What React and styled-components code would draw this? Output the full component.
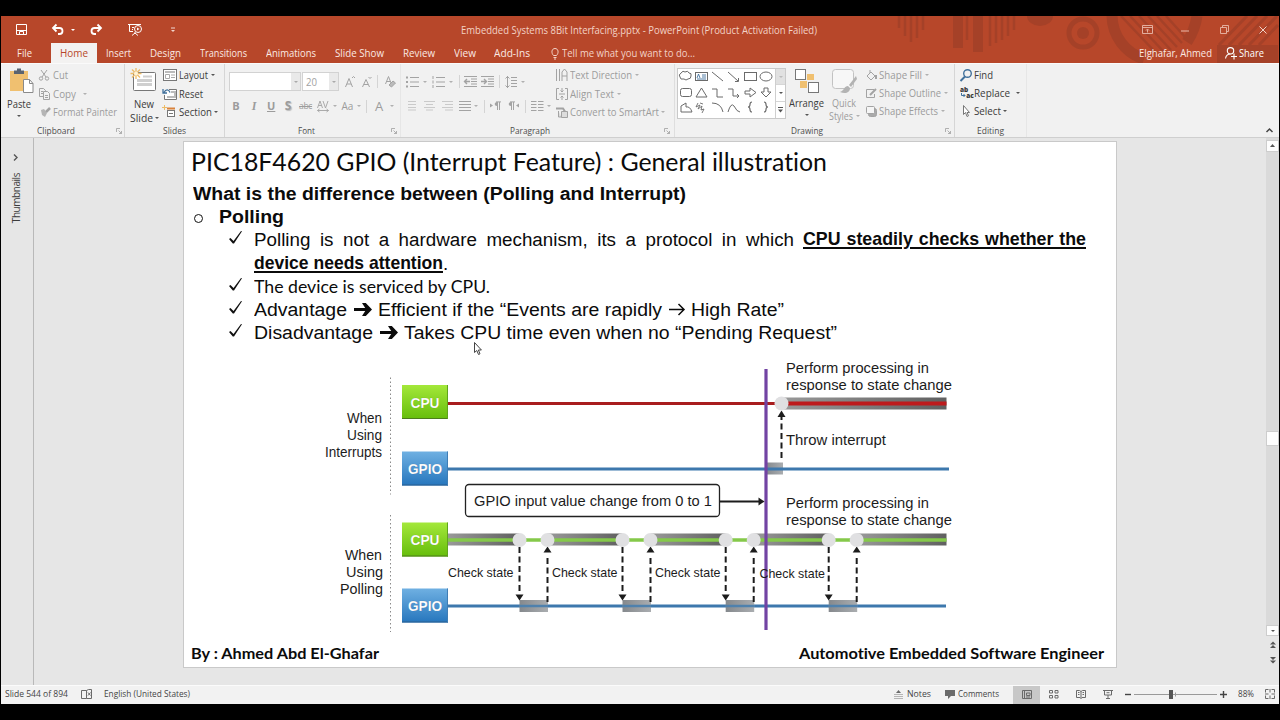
import React, { useLayoutEffect, useRef, useState } from "react";
import styled, { createGlobalStyle } from "styled-components";

const Global = createGlobalStyle`
  * { box-sizing: border-box; }
  body { margin: 0; background: #000; overflow: hidden; }
`;

const ui = `"Open Sans", "Noto Sans", sans-serif`;
const arial = `"Liberation Sans", Arial, sans-serif`;
const calibri = `Lato, "Open Sans", sans-serif`;

/* ---------- text fitted to a known measure ---------- */

const FitBox = styled.span`
  display: inline-block;
  flex: none;
  white-space: pre;
  font-variant-ligatures: none;
  width: ${(p) => p.$w}px;
  margin-left: ${(p) => p.$ml || 0}px;
  ${(p) => p.$color && `color: ${p.$color};`}
  ${(p) => p.$size && `font-size: ${p.$size}px;`}
  ${(p) => p.$family && `font-family: ${p.$family};`}
  ${(p) => p.$bold && `font-weight: 700;`}
`;
const FitText = styled.span`
  display: inline-block;
  transform-origin: 0 50%;
  text-decoration: ${(p) => (p.$on ? "underline" : "none")};
  text-decoration-thickness: 2px;
  text-underline-offset: 2px;
`;

function Fit({ w, ml, color, size, family, bold, underline, words, children }) {
  const ref = useRef(null);
  const [fit, setFit] = useState({});
  useLayoutEffect(() => {
    const natural = ref.current.getBoundingClientRect().width;
    const gaps = children.split(" ").length - 1;
    setFit(words ? { wordSpacing: (w - natural) / gaps } : { transform: `scaleX(${w / natural})` });
  }, []);
  return (
    <FitBox $w={w} $ml={ml} $color={color} $size={size} $family={family} $bold={bold}>
      <FitText ref={ref} $on={underline} style={fit}>{children}</FitText>
    </FitBox>
  );
}

/* ---------- window ---------- */

const Screen = styled.div`
  width: 1280px;
  height: 720px;
  padding: 16px 1px;
  background: #000;
  font: 11px/14px ${ui};
  color: #3b3b3b;
`;
const Window = styled.div`
  display: flex;
  flex-direction: column;
  height: 688px;
  background: #e6e6e6;
`;
const Header = styled.header`
  position: relative;
  height: 47px;
  background: #b7472a;
  color: #fbe9e3;
`;
const Decor = styled.svg`
  position: absolute;
  right: 0;
  top: 0;
`;
const Bar = styled.div`
  position: relative;
  display: flex;
  align-items: center;
  height: ${(p) => p.$h}px;
`;
const Tab = styled.div`
  display: flex;
  align-items: center;
  justify-content: center;
  width: 46px;
  height: 20px;
  margin-left: 19px;
  background: #f3f2f1;
  color: #b7472a;
`;
const Icon = styled.svg`
  flex: none;
  display: block;
  fill: none;
  stroke: ${(p) => p.$c || "#a3a3a3"};
  margin-left: ${(p) => p.$ml || 0}px;
  overflow: visible;
`;
const Ico = ({ w, h, ml, c, sw = 1, children }) => (
  <Icon width={w} height={h} viewBox={`0 0 ${w} ${h}`} $ml={ml} $c={c} strokeWidth={sw}>
    {children}
  </Icon>
);
const Caret = styled.i`
  flex: none;
  width: 0;
  height: 0;
  border: 2px solid transparent;
  border-top: 2.5px solid ${(p) => p.$c || "#555"};
  border-bottom: 0;
  margin-left: ${(p) => p.$ml || 0}px;
`;

/* ---------- ribbon ---------- */

const Ribbon = styled.div`
  display: flex;
  height: 75px;
  background: #f1f1f1;
  border-top: 1px solid #fafafa;
  border-bottom: 1px solid #cfcfcf;
`;
const Group = styled.section`
  display: flex;
  flex-direction: column;
  width: ${(p) => p.$w}px;
  height: 73px;
  border-right: 1px solid ${(p) => p.$line || "#d6d6d6"};
`;
const Content = styled.div`
  display: flex;
  height: 61px;
  padding-top: 2px;
`;
const GroupLabel = styled.div`
  display: flex;
  align-items: center;
  height: 12px;
  padding-left: ${(p) => p.$x}px;
  font-size: 9.5px;
  color: #4c4c4c;
`;
const Stack = styled.div`
  display: flex;
  flex-direction: column;
  flex: none;
  width: ${(p) => p.$w}px;
  margin-left: ${(p) => p.$ml || 0}px;
  padding-top: ${(p) => p.$pt || 0}px;
`;
const Line = styled.div`
  display: flex;
  align-items: center;
  height: ${(p) => p.$h || 18.5}px;
  padding-left: ${(p) => p.$x || 0}px;
  color: ${(p) => (p.$off ? "#9c9c9c" : "#3b3b3b")};
`;
const Combo = styled.div`
  display: flex;
  align-items: stretch;
  justify-content: space-between;
  width: ${(p) => p.$w}px;
  height: 19px;
  margin-left: ${(p) => p.$ml || 0}px;
  padding-left: 3px;
  background: #fff;
  border: 1px solid #d2d2d2;
  color: #a2a2a2;
  line-height: 17px;
`;
const ComboButton = styled.div`
  display: flex;
  align-items: center;
  justify-content: center;
  width: 9px;
  background: #e9e9e9;
`;
const Sep = styled.i`
  flex: none;
  width: 1px;
  height: 13px;
  background: #d4d4d4;
  margin-left: ${(p) => p.$ml}px;
`;
const Glyph = styled.span`
  flex: none;
  width: ${(p) => p.$w}px;
  margin-left: ${(p) => p.$ml || 0}px;
  text-align: center;
  white-space: nowrap;
  font-size: ${(p) => p.$size || 11}px;
  font-weight: ${(p) => (p.$b ? 700 : 400)};
  font-style: ${(p) => (p.$i ? "italic" : "normal")};
  font-family: ${(p) => p.$family || ui};
  text-decoration: ${(p) => p.$deco || "none"};
  text-shadow: ${(p) => (p.$shadow ? "1px 1px 1px #bbb" : "none")};
  letter-spacing: ${(p) => p.$ls || 0}px;
`;
const Gallery = styled.div`
  display: flex;
  width: 109px;
  height: 51px;
  margin: 2px 0 0 2px;
  background: #fff;
  border: 1px solid #c9c9c9;
`;
const GalleryScroll = styled.div`
  display: grid;
  grid-template-rows: repeat(3, 1fr);
  width: 11px;
  border-left: 1px solid #cfcfcf;
  & > div { display: flex; align-items: center; justify-content: center; border-bottom: 1px solid #d6d6d6; }
  & > div:first-child { background: #e1e1e1; }
  & > div:last-child { border-bottom: 0; }
`;

const Launcher = ({ ml }) => (
  <Ico w={6} h={6} ml={ml} c="#a0a0a0">
    <path d="M.5 4V.5H4M2.500 2.500l3 3M5.500 3v2.500H3" strokeWidth=".8" />
  </Ico>
);

function Clipboard() {
  return (
    <Group $w={124}>
      <Content>
        <Stack $w={30} $ml={4}>
          <Line $h={30} $x={5}>
            <Ico w={24} h={26}>
              <rect x="0" y="3" width="18" height="20" fill="#f0c070" stroke="none" />
              <path d="M4 6V2.500h3V.5h4v2h3V6z" fill="#5b6470" stroke="none" />
              <path d="M13.500 11.500h6l3.500 4v9h-9.500z" fill="#fff" stroke="#8a8a8a" />
              <path d="M19.500 11.500v4H23" stroke="#8a8a8a" />
            </Ico>
          </Line>
          <Line $h={15} $x={2}><Fit w={24}>Paste</Fit></Line>
          <Line $h={10} $x={12}><Caret /></Line>
        </Stack>
        <Stack $w={85} $ml={4}>
          <Line $off>
            <Ico w={10} h={11}><path d="M2 0l5 7M8 0L3 7" /><circle cx="2" cy="8.500" r="1.700" /><circle cx="8" cy="8.500" r="1.700" /></Ico>
            <Fit w={15} ml={4}>Cut</Fit>
          </Line>
          <Line $off>
            <Ico w={11} h={12}><path d="M.5.5h4l2 2v6h-6zM2 3.500h2M2 5.500h3" /><path d="M4.500 3.500h4l2 2v6h-6zM6 7.500h3M6 9.500h3" fill="#f1f1f1" /></Ico>
            <Fit w={23} ml={3}>Copy</Fit>
            <Caret $ml={7} $c="#b0b0b0" />
          </Line>
          <Line $off>
            <Ico w={11} h={11} ml={1}><path d="M1 3l3-1 3 4-2 4-3-2z" fill="#b5b5b5" stroke="none" /><path d="M6 5l4-4" strokeWidth="2.500" /></Ico>
            <Fit w={64} ml={2}>Format Painter</Fit>
          </Line>
        </Stack>
      </Content>
      <GroupLabel $x={36}><Fit w={38}>Clipboard</Fit><Launcher ml={41} /></GroupLabel>
    </Group>
  );
}

function Slides() {
  return (
    <Group $w={100}>
      <Content>
        <Stack $w={34} $ml={3}>
          <Line $h={30} $x={3}>
            <Ico w={27} h={26}>
              <rect x="2.500" y="4.500" width="22" height="18" rx="1" fill="#fff" stroke="#777" />
              <path d="M12 8.500h9" stroke="#cfcfcf" strokeWidth="2" />
              <path d="M6 12.500h15M6 16.500h15" stroke="#cfcfcf" strokeWidth="3" />
              <path d="M5 0v11M-.5 5.500h11M1 1.500l8 8M9 1.500l-8 8" stroke="#eebc66" strokeWidth="1.300" />
              <circle cx="5" cy="5.500" r="2" fill="#fff3d6" stroke="none" />
            </Ico>
          </Line>
          <Line $h={15} $x={6}><Fit w={20}>New</Fit></Line>
          <Line $h={13} $x={2}><Fit w={23}>Slide</Fit><Caret $ml={2} /></Line>
        </Stack>
        <Stack $w={60} $ml={1}>
          <Line>
            <Ico w={14} h={12} c="#777"><rect x=".5" y=".5" width="13" height="11" fill="#fff" /><path d="M2 3h10" stroke="#bbb" strokeWidth="2" /><path d="M2.500 5.500h4v4h-4zM8 6h4M8 8.500h4" stroke="#aaa" /></Ico>
            <Fit w={29} ml={2}>Layout</Fit><Caret $ml={3} />
          </Line>
          <Line>
            <Ico w={14} h={12} c="#777"><path d="M6 1.500h7.500v10H1.500V7" fill="#fff" /><path d="M8 4h4v5H4" stroke="#bbb" strokeWidth="2" /><path d="M1 4.500c2-4 5-3 6 0M0 1v4h4" stroke="#41719c" strokeWidth="1.300" /></Ico>
            <Fit w={24} ml={2}>Reset</Fit>
          </Line>
          <Line>
            <Ico w={14} h={12} c="#777"><path d="M4 2.500h8" stroke="#d9823b" strokeWidth="2" /><rect x="4.500" y="4.500" width="7" height="6" fill="#fff" /><path d="M6 7.500h4" /><path d="M1.500-1v5M-1 1.500h5" stroke="#eebc66" /></Ico>
            <Fit w={33} ml={2}>Section</Fit><Caret $ml={2} />
          </Line>
        </Stack>
      </Content>
      <GroupLabel $x={38}><Fit w={23}>Slides</Fit></GroupLabel>
    </Group>
  );
}

function FontGroup() {
  return (
    <Group $w={176} $line="#e6e6e6">
      <Content>
        <Stack $w={172} $ml={3} $pt={3.5}>
          <Line $h={24} $off>
            <Combo $w={72} $ml={1}><span /><ComboButton><Caret $c="#aaa" /></ComboButton></Combo>
            <Combo $w={37} $ml={1}><Fit w={11}>20</Fit><ComboButton><Caret $c="#aaa" /></ComboButton></Combo>
            <Ico w={10} h={12} ml={6}><path d="M.5 11L4 2.500 7.500 11M2 8h4M7 2l1.500-1.500L10 2" /></Ico>
            <Ico w={10} h={12} ml={7}><path d="M.5 11L4 3.500 7.500 11M2 8.500h4M6.500 1L8 2.500 9.500 1" /></Ico>
            <Sep $ml={5} />
            <Ico w={11} h={12} ml={7}><path d="M.5 8L3.500.5 6 7M1.500 5.500h4" /><path d="M4 9l4-4 2.500 2-4 4z" fill="#bbb" /></Ico>
          </Line>
          <Line $h={25} $x={4} $off>
            <Glyph $w={8} $b>B</Glyph>
            <Glyph $w={8} $ml={10} $i $b $size={12} $family={`"Liberation Serif", serif`}>I</Glyph>
            <Glyph $w={8} $ml={9} $b $deco="underline">U</Glyph>
            <Glyph $w={8} $ml={9} $b $shadow $size={12}>S</Glyph>
            <Glyph $w={13} $ml={7} $size={8.5} $deco="line-through" $ls={-0.3}>abc</Glyph>
            <Ico w={13} h={12} ml={5}><path d="M.5 8L3 1l2.500 7M1.500 5.500h3M6 1l2.500 7L11 1M.5 10.500h11M2.500 9l-2 1.500 2 1.500M9.500 9l2 1.500-2 1.500" strokeWidth=".9" /></Ico>
            <Caret $ml={3} $c="#b0b0b0" />
            <Glyph $w={13} $ml={4} $size={10}>Aa</Glyph>
            <Caret $ml={3} $c="#b0b0b0" />
            <Sep $ml={5} />
            <Glyph $w={8} $ml={8} $size={13}>A</Glyph>
            <Caret $ml={7} $c="#b0b0b0" />
          </Line>
        </Stack>
      </Content>
      <GroupLabel $x={73}><Fit w={17}>Font</Fit><Launcher ml={76} /></GroupLabel>
    </Group>
  );
}

const Lines = ({ ml, o = 1, d = "M0 1.500h12M0 4.500h12M0 7.500h12M0 10.500h12" }) => (
  <Ico w={12} h={12} ml={ml}><path d={d} opacity={o} /></Ico>
);

function Paragraph() {
  return (
    <Group $w={274} $line="#dedede">
      <Content>
        <Stack $w={150} $ml={5} $pt={3.5}>
          <Line $h={24} $off>
            <Ico w={13} h={12}><path d="M4 1.500h9M4 6h9M4 10.500h9" /><path d="M0 1.500h2M0 6h2M0 10.500h2" strokeWidth="2" /></Ico>
            <Caret $ml={4} $c="#b0b0b0" />
            <Ico w={13} h={12} ml={5}><path d="M4 1.500h9M4 6h9M4 10.500h9M1 0v3M1 4.500v3M1 9v3" /></Ico>
            <Caret $ml={4} $c="#b0b0b0" />
            <Sep $ml={6} />
            <Ico w={13} h={11} ml={4}><path d="M0 .5h13M7 3h6M7 5.500h6M7 8h6M0 10.500h13" /><path d="M6 5.500H1M3 3L.5 5.500 3 8" strokeWidth="1.400" /></Ico>
            <Ico w={13} h={11} ml={4}><path d="M0 .5h13M7 3h6M7 5.500h6M7 8h6M0 10.500h13" /><path d="M0 5.500h5M3 3l2.500 2.500L3 8" strokeWidth="1.400" /></Ico>
            <Sep $ml={5} />
            <Ico w={12} h={12} ml={5}><path d="M2.500 0v12M.5 2.500l2-2 2 2M.5 9.500l2 2 2-2M6 1.500h6M6 4.500h6M6 7.500h6M6 10.500h6" /></Ico>
            <Caret $ml={4} $c="#b0b0b0" />
          </Line>
          <Line $h={25} $x={2} $off>
            <Lines o={0.5} d="M0 1.500h8M0 4.500h8M0 7.500h8M0 10h8" />
            <Lines ml={4} o={0.5} d="M0 1.500h11M2 4.500h7M0 7.500h11M2 10h7" />
            <Lines ml={6} o={0.5} d="M0 1.500h11M3 4.500h8M0 7.500h11M3 10h8" />
            <Lines ml={5} />
            <Caret $ml={3} $c="#b0b0b0" />
            <Sep $ml={6} />
            <Ico w={11} h={10} ml={5}><path d="M0 2.500l3 2-3 2zM7 1c-3 0-3 4 0 4z" fill="#a3a3a3" stroke="none" /><path d="M7.500 9V1M9.500 9V1M6 .9h5" /></Ico>
            <Ico w={11} h={10} ml={7}><path d="M11 2.500l-3 2 3 2zM3 1c-3 0-3 4 0 4z" fill="#a3a3a3" stroke="none" /><path d="M3.500 9V1M5.500 9V1M2 .9h5" /></Ico>
            <Sep $ml={6} />
            <Lines ml={5} d="M0 1.500h5.500M0 4.500h5.500M0 7.500h5.500M0 10.500h5.500M7 1.500h5.500M7 4.500h5.500M7 7.500h5.500M7 10.500h5.500" />
            <Caret $ml={4} $c="#b0b0b0" />
          </Line>
        </Stack>
        <Stack $w={115}>
          <Line $off>
            <Ico w={12} h={12}><path d="M.5 0v12M3.500 0v12M6 12V3l2.500-3L11 3v9M6 7h5" /></Ico>
            <Fit w={62} ml={2}>Text Direction</Fit><Caret $ml={3} $c="#b0b0b0" />
          </Line>
          <Line $off>
            <Ico w={12} h={12}><path d="M3 .5H.5v11H3M9 .5h2.500v11H9M6 0v4M6 12V8M4.500 2.500L6 4l1.500-1.500M4.500 9.500L6 8l1.500 1.500M3 6h6" /></Ico>
            <Fit w={44} ml={2}>Align Text</Fit><Caret $ml={3} $c="#b0b0b0" />
          </Line>
          <Line $off>
            <Ico w={12} h={11}><path d="M0 1.500h7l2 3" strokeWidth="2" /><path d="M2.500 4v6h3M5.500 4.500h6v6h-6z" fill="#ddd" /></Ico>
            <Fit w={89} ml={2}>Convert to SmartArt</Fit><Caret $ml={2} $c="#b0b0b0" />
          </Line>
        </Stack>
      </Content>
      <GroupLabel $x={109}><Fit w={40}>Paragraph</Fit><Launcher ml={114} /></GroupLabel>
    </Group>
  );
}

function Drawing() {
  return (
    <Group $w={280}>
      <Content>
        <Gallery>
          <Ico w={97} h={49} c="#6b6b6b">
            <path d="M3 4q2-3 4-1 3-2 4 1 3 0 2 3 0 3-3 3-2 2-4 0-4 1-4-2-2-2 1-4z" />
            <rect x="17.500" y="3.500" width="12" height="8" /><path d="M19 9l1.500-4L22 9M24 6h4M24 8h4M19 10h9" stroke="#41719c" strokeWidth=".9" />
            <path d="M34 3l11 9M50 3l10 9M60.500 9v3.500H57" />
            <rect x="66.500" y="3.500" width="12" height="8" /><ellipse cx="88" cy="7.500" rx="6" ry="4.500" />
            <rect x="2.500" y="19.500" width="11" height="8" rx="2" /><path d="M23.500 19l5.500 9H18z" />
            <path d="M34 20h5v8h6M50 20h5v7h6M59 25l2 2-2 2" />
            <path d="M67 22h5v-3l6 4.500-6 4.500v-3h-5zM86 19h4v4h3l-5 5-5-5h3z" />
            <path d="M3 43V37l5-3 0 4q4-1 6 5z" /><path d="M20 34l-2 4 4-2-2 4 4-3-1 4 3-1-2 4M22 34l3 1" strokeWidth=".9" />
            <path d="M34 34q9 0 11 9M50 43q3-10 6-6 3 6 6 6" />
            <path d="M74 33q-2 0-2 2.500T70 38q2 0 2 2.500T74 43M86 33q2 0 2 2.500T90 38q-2 0-2 2.500T86 43" strokeWidth="1.200" />
          </Ico>
          <GalleryScroll>
            <div><Caret $c="#bbb" /></div>
            <div><Caret /></div>
            <div><Ico w={5} h={6} c="#555"><path d="M0 .5h5" /><path d="M0 2.500h5L2.500 5.500z" fill="#555" stroke="none" /></Ico></div>
          </GalleryScroll>
        </Gallery>
        <Stack $w={40} $ml={2}>
          <Line $h={30} $x={7}>
            <Ico w={24} h={24} c="#777">
              <path d="M12 5h7v6h-7zM5 12h7v7H5z" fill="#f0c070" stroke="none" />
              <rect x=".5" y=".5" width="10" height="10" fill="#fff" /><rect x="13.500" y="13.500" width="10" height="10" fill="#fff" />
            </Ico>
          </Line>
          <Line $h={13} $x={1}><Fit w={35}>Arrange</Fit></Line>
          <Line $h={12} $x={17}><Caret /></Line>
        </Stack>
        <Stack $w={36}>
          <Line $h={30} $x={4} $off>
            <Ico w={25} h={26} c="#c2c2c2">
              <rect x=".5" y="1.500" width="21" height="19" rx="3" fill="#f7f7f7" />
              <path d="M24 8l-7 9 2 2 6-8zM16 18c-4 0-3 4-8 6 5 2 10 1 10-4z" fill="#b3b3b3" stroke="none" />
            </Ico>
          </Line>
          <Line $h={13} $x={4} $off><Fit w={24}>Quick</Fit></Line>
          <Line $h={13} $x={1} $off><Fit w={24}>Styles</Fit><Caret $ml={3} $c="#b0b0b0" /></Line>
        </Stack>
        <Stack $w={84} $ml={2}>
          <Line $h={18} $off>
            <Ico w={11} h={11}><path d="M1 6l4-4 4 4-4 4zM4 3V0" /><path d="M10 5v4" strokeWidth="2" /></Ico>
            <Fit w={43} ml={2}>Shape Fill</Fit><Caret $ml={3} $c="#b0b0b0" />
          </Line>
          <Line $h={18} $off>
            <Ico w={11} h={11}><path d="M8 1.500H.5v8h8V6" /><path d="M4 7l6-6" strokeWidth="2" /></Ico>
            <Fit w={62} ml={2}>Shape Outline</Fit><Caret $ml={3} $c="#b0b0b0" />
          </Line>
          <Line $h={18} $off>
            <Ico w={11} h={11}><rect x="2.500" y="2.500" width="8" height="8" rx="2" fill="#aaa" /><rect x=".5" y=".5" width="8" height="7" rx="1" fill="#f5f5f5" /></Ico>
            <Fit w={59} ml={2}>Shape Effects</Fit><Caret $ml={3} $c="#b0b0b0" />
          </Line>
        </Stack>
      </Content>
      <GroupLabel $x={116}><Fit w={32}>Drawing</Fit><Launcher ml={122} /></GroupLabel>
    </Group>
  );
}

const Letters = styled.span`
  display: flex;
  flex: none;
  align-items: flex-start;
  width: 13px;
  height: 12px;
  font: 700 6.5px/6px ${ui};
  & > b:last-child { align-self: flex-end; margin-left: -2px; }
`;

function Editing() {
  return (
    <Group $w={72} $line="#e6e6e6">
      <Content>
        <Stack $w={68} $ml={5}>
          <Line $h={18}>
            <Ico w={12} h={12} c="#41719c" sw={1.4}><circle cx="7.500" cy="4.500" r="3.800" /><path d="M5 7.500L.5 12" strokeWidth="2" /></Ico>
            <Fit w={19} ml={2}>Find</Fit>
          </Line>
          <Line $h={18}>
            <Letters><b>ab</b><b>ac</b></Letters>
            <Ico w={5} h={5} ml={-12} c="#41719c"><path d="M.5 2v2.500H4M2.500 3l1.500 1.500L2.500 6" /></Ico>
            <Fit w={36} ml={8}>Replace</Fit><Caret $ml={6} />
          </Line>
          <Line $h={18}>
            <Ico w={12} h={12} c="#777"><path d="M3.500.5v9l2-2 1.500 4 1.500-.7L7 7.500h2.500z" fill="#fff" /></Ico>
            <Fit w={27} ml={2}>Select</Fit><Caret $ml={2} />
          </Line>
        </Stack>
      </Content>
      <GroupLabel $x={22}><Fit w={27}>Editing</Fit></GroupLabel>
    </Group>
  );
}
const RibbonEnd = styled.div`
  display: flex;
  flex: 1;
  align-items: flex-end;
  justify-content: flex-end;
  padding: 0 6px 4px 0;
`;

/* ---------- header ---------- */

const c = "#fff";
const shade = "#a54128";
const TitleBar = () => (
  <Header>
    <Decor width="400" height="47" viewBox="880 16 400 47">
      <g stroke={shade} fill="none">
        <path d="M900 16v12M906 16v20M912 16v26M918 16v22M924 16v14" strokeWidth="2.500" />
        <path d="M959 16v32M979 16v36" strokeWidth="10" />
        <path d="M968 16v24M991 16v30M997 16v27M1003 16v24M1009 16v20M1015 16v14" strokeWidth="2.500" />
        <path d="M1028 16a13 10 0 0 0 26 0z" fill={shade} stroke="none" />
        <circle cx="1084" cy="33" r="14" strokeWidth="5" /><circle cx="1084" cy="33" r="6" fill={shade} stroke="none" />
        <path d="M1113 16a46 46 0 0 0 32 43M1198 16q-2 14-10 26" strokeWidth="11" />
        <path d="M1122 16l36 38M1131 16l34 36M1140 16l32 34M1149 16l29 31M1158 16l25 27M1167 16l20 22" strokeWidth="2.500" />
        <path d="M1220 45l28-29M1230 45l28-29M1240 45l28-29M1250 45l28-29M1260 45l19-20" strokeWidth="3" />
        <path d="M1218 45h61v18h-61z" fill={shade} stroke="none" />
      </g>
    </Decor>
    <Bar $h={27}>
      <Ico w={11} h={11} ml={15} c={c}><path d="M.5.5h10v10H.5zM.5 6.500h10M3.500 10v-2.500h4V10" /></Ico>
      <Ico w={12} h={11} ml={25} c={c} sw={1.8}><path d="M4.500.5L1 4l3.500 3.500M1 4h6.500a3 3 0 0 1 0 6H6" /></Ico>
      <Caret $ml={7} $c="#fff" />
      <Ico w={12} h={11} ml={15} c={c} sw={1.8}><path d="M7.500.5L11 4 7.500 7.500M11 4H4.500a3 3 0 0 0 0 6H6" /></Ico>
      <Ico w={14} h={12} ml={26} c={c}><path d="M0 .5h13M1.500.5v7H5M7 8v2M4 11.500L7 9l3 2.500M4 3.500h2M4 5.500h1" /><circle cx="10" cy="5" r="3.500" /><path d="M9 3.500v3l2.500-1.500z" fill="#fff" stroke="none" /></Ico>
      <Ico w={4} h={6} ml={29} c={c}><path d="M0 1h4" strokeWidth=".8" /><path d="M0 3h4l-2 2z" fill="#f3d5cb" stroke="none" /></Ico>
      <Fit w={356} ml={286} color="#f3d2c6">Embedded Systems 8Bit Interfacing.pptx - PowerPoint (Product Activation Failed)</Fit>
      <Ico w={11} h={9} ml={325} c="#e8b9aa"><path d="M.5.5h10v8H.5zM.5 2.500h10M5.500 7.500v-3M4 5.500L5.500 4 7 5.500" strokeWidth=".9" /></Ico>
      <Ico w={8} h={9} ml={28} c="#e8b9aa"><path d="M0 6h8" /></Ico>
      <Ico w={9} h={9} ml={31} c="#e8b9aa"><path d="M.5 2.500h6v6h-6zM2.500 2.500v-2h6v6h-2" strokeWidth=".9" /></Ico>
      <Ico w={8} h={8} ml={30} c="#f3d2c6"><path d="M.5.5l7 7M7.500.5l-7 7" /></Ico>
    </Bar>
    <Bar $h={20}>
      <Fit w={15} ml={16}>File</Fit>
      <Tab><Fit w={28}>Home</Fit></Tab>
      <Fit w={25} ml={9}>Insert</Fit>
      <Fit w={31} ml={19}>Design</Fit>
      <Fit w={47} ml={19}>Transitions</Fit>
      <Fit w={50} ml={19}>Animations</Fit>
      <Fit w={49} ml={19}>Slide Show</Fit>
      <Fit w={32} ml={19}>Review</Fit>
      <Fit w={22} ml={19}>View</Fit>
      <Fit w={36} ml={18}>Add-Ins</Fit>
      <Ico w={8} h={11} ml={21} c="#f3d2c6"><path d="M2.500 7.500C0 5 .5.5 4 .5s4 4.500 1.500 7zM2.500 9.500h3M3 11h2" /></Ico>
      <Fit w={133} ml={3} color="#f3d2c6">Tell me what you want to do...</Fit>
      <Fit w={73} ml={444}>Elghafar, Ahmed</Fit>
      <Ico w={12} h={12} ml={13} c={c} sw={1.1}><circle cx="5.500" cy="3.800" r="3.200" /><path d="M.5 11.500c.5-3 2-4.500 5-4.500M6 9.500h6M9 6.500v6" /></Ico>
      <Fit w={25} ml={2} color="#fff">Share</Fit>
    </Bar>
  </Header>
);

/* ---------- workspace ---------- */

const Workspace = styled.main`
  display: flex;
  height: 547px;
`;
const Thumbs = styled.aside`
  display: flex;
  flex-direction: column;
  align-items: center;
  width: 33px;
  padding: 16px 3px 0 0;
  border-right: 1px solid #b9b9b9;
`;
const Vertical = styled.span`
  writing-mode: vertical-rl;
  transform: rotate(180deg);
  margin-top: 12px;
  font-size: 10px;
  letter-spacing: -0.45px;
  line-height: 14px;
`;
const Stage = styled.div`
  flex: 1;
  padding: 3px 0 0 149px;
`;
const Slide = styled.article`
  position: relative;
  width: 934px;
  height: 527px;
  background: #fff;
  border: 1px solid #c9c9c9;
  color: #0b0b0b;
  font-family: ${arial};
  font-size: 18.8px;
`;
const SlideTitle = styled.h1`
  display: flex;
  height: 39.7px;
  margin: 0;
  padding-left: 7px;
  font: 400 24.5px/39px ${calibri};
`;
const Row = styled.div`
  display: flex;
  height: 23.3px;
  line-height: 23.3px;
  padding-left: ${(p) => p.$x}px;
`;
const Bullet = styled.span`
  width: ${(p) => p.$w}px;
  padding-top: ${(p) => p.$pt || 0}px;
`;
const Arrow = styled.span`
  width: ${(p) => p.$w}px;
  margin: 5px 6px 0 7px;
`;
const Figure = styled.svg`
  display: block;
  margin: 15.2px 0 0 136px;
  font-family: ${arial};
  overflow: visible;
`;
const Footer = styled.footer`
  display: flex;
  justify-content: space-between;
  padding: 4px 12px 0 7px;
  font: 700 16px/26px ${calibri};
`;
const Pointer = styled.div`
  position: absolute;
  left: 290px;
  top: 200px;
`;
const ScrollBar = styled.div`
  display: flex;
  flex-direction: column;
  align-items: center;
  width: 13px;
  height: 530px;
  padding-top: 2px;
  background: #dadada;
`;
const ScrollButton = styled.div`
  display: flex;
  align-items: center;
  justify-content: center;
  width: 13px;
  height: ${(p) => p.$h}px;
  margin-top: ${(p) => p.$mt || 0}px;
  background: #fdfdfd;
  border: 1px solid #cdcdcd;
`;
const ScrollPage = styled.div`
  display: flex;
  flex-direction: column;
  align-items: center;
  justify-content: space-around;
  width: 13px;
  height: 32px;
  background: #e6e6e6;
`;

const Check = () => (
  <Bullet $w={26} $pt={3}>
    <Ico w={13} h={13} ml={1} c="#111"><path d="M0 8l1.500-1 3 3L12 0l1 .3L5 12.500H3.800z" fill="#111" stroke="none" /></Ico>
  </Bullet>
);
const HeavyArrow = () => (
  <Arrow $w={18}><Ico w={18} h={14} c="#0b0b0b"><path d="M0 6.500h15" strokeWidth="3" /><path d="M8 0h3.800l6.200 6.500-6.200 6.500H8l4.200-6.500z" fill="#0b0b0b" stroke="none" /></Ico></Arrow>
);
const ThinArrow = () => (
  <Arrow $w={16}><Ico w={16} h={14} c="#0b0b0b" sw={1.5}><path d="M0 6.500h15M9.500 1L15 6.500 9.500 12" /></Ico></Arrow>
);

const Box = ({ y, label, gpio }) => (
  <g>
    <rect x="402" y={y} width="46" height="34" fill={gpio ? "url(#blueBox)" : "url(#greenBox)"} />
    <path d={`M402 ${y + 33.5}h46`} stroke={gpio ? "#2b5f8f" : "#4c7d1c"} />
    <path d={`M447.500 ${y}v34`} stroke={gpio ? "#3f7db5" : "#5fa31d"} />
    <text x={gpio ? 408 : 410.5} y={y + 22.5} textLength={gpio ? 34 : 29} lengthAdjust="spacingAndGlyphs" fontSize="14" fontWeight="700" fill="#fff" stroke="#0003" strokeWidth=".4">{label}</text>
  </g>
);
const Txt = ({ x, y, w, s = 14.7, children }) => (
  <text x={x} y={y} textLength={w} lengthAdjust="spacingAndGlyphs" fontSize={s} fill="#1c1c1c">{children}</text>
);
const checks = [519.5, 622.5, 725.7, 828.7];
const busy = [[448, 519], [547, 622], [651, 726], [754, 829], [857, 946.5]];

const Diagram = () => (
  <Figure width="640" height="276" viewBox="320 360 640 276">
    <defs>
      <linearGradient id="greenBox" x1="0" y1="0" x2="0" y2="1"><stop offset="0" stopColor="#a4e83a" /><stop offset="1" stopColor="#66bd0c" /></linearGradient>
      <linearGradient id="blueBox" x1="0" y1="0" x2="0" y2="1"><stop offset="0" stopColor="#6fb0e2" /><stop offset="1" stopColor="#2676bd" /></linearGradient>
      <linearGradient id="busyBar" x1="0" y1="0" x2="1" y2="0"><stop offset="0" stopColor="#999" /><stop offset="1" stopColor="#606060" /></linearGradient>
      <linearGradient id="gpioBar" x1="0" y1="0" x2="1" y2="0"><stop offset="0" stopColor="#85898d" /><stop offset="1" stopColor="#aaadb0" /></linearGradient>
    </defs>
    <path d="M390.500 377.500v117M390.500 515v117" stroke="#8a8a8a" strokeDasharray="1.500 2.500" />
    <Txt x={347} y={422.6} w={35}>When</Txt><Txt x={347} y={440} w={35}>Using</Txt><Txt x={325} y={457} w={57}>Interrupts</Txt>
    <Txt x={345} y={559.6} w={37}>When</Txt><Txt x={346} y={577} w={37}>Using</Txt><Txt x={340} y={594.3} w={43}>Polling</Txt>

    <rect x="781" y="397.500" width="165.500" height="12" fill="url(#busyBar)" />
    <path d="M448 403.500h340" stroke="#a81c1e" strokeWidth="3" /><path d="M786 403.500h160.500" stroke="#bd1a1c" strokeWidth="4" />
    <rect x="766" y="462.500" width="17" height="12" fill="url(#gpioBar)" />
    <path d="M448 469h501M448 606h498" stroke="#3d78ad" strokeWidth="3" />

    {busy.map(([a, b]) => <rect key={a} x={a} y="533.500" width={b - a} height="12" fill="url(#busyBar)" />)}
    <path d="M448 540h498.500" stroke="#85c94a" strokeWidth="3.400" />
    {checks.map((x) => (
      <g key={x}>
        <rect x={x} y="600" width="28.500" height="12" fill="url(#gpioBar)" />
        <path d={`M${x} 606h28.500`} stroke="#4f81ad" strokeWidth="2.500" />
      </g>
    ))}
    <path d="M766 369v261" stroke="#7243a3" strokeWidth="3.200" />
    {checks.map((x) => (
      <g key={x} stroke="#1c1c1c" fill="#1c1c1c">
        <path d={`M${x} 547v46M${x + 28} 602v-46`} strokeWidth="2" strokeDasharray="6 3.500" />
        <path d={`M${x - 4} 594.500h8l-4 6zM${x + 24} 552.500h8l-4-6z`} stroke="none" />
        <circle cx={x} cy="540" r="7" fill="#e0e0e2" stroke="none" />
        <circle cx={x + 28} cy="540" r="7" fill="#e0e0e2" stroke="none" />
      </g>
    ))}
    <path d="M781.500 458v-42" stroke="#1c1c1c" strokeWidth="2" strokeDasharray="6 3.500" />
    <path d="M777.500 417h8l-4-6.500z" fill="#1c1c1c" />
    <circle cx="781.500" cy="403.500" r="7" fill="#e0e0e2" />

    <rect x="465.500" y="484.500" width="254" height="32" rx="3.500" fill="#fff" stroke="#222" strokeWidth="1.300" />
    <Txt x={474} y={506} w={238} s={14.8}>GPIO input value change from 0 to 1</Txt>
    <path d="M720 501.500h40" stroke="#1c1c1c" strokeWidth="1.800" /><path d="M758.500 497.500v8l6-4z" fill="#1c1c1c" />

    <Txt x={786} y={373} w={143}>Perform processing in</Txt><Txt x={786} y={390} w={166}>response to state change</Txt>
    <Txt x={786} y={445} w={100}>Throw interrupt</Txt>
    <Txt x={786} y={508} w={143}>Perform processing in</Txt><Txt x={786} y={525} w={166}>response to state change</Txt>
    {[[448, 577], [552, 577], [655, 577], [759.5, 578]].map(([x, y]) => <Txt key={x} x={x} y={y} w={65.5} s={12.4}>Check state</Txt>)}
    <Box y={385} label="CPU" /><Box y={451.5} label="GPIO" gpio /><Box y={522.5} label="CPU" /><Box y={588.5} label="GPIO" gpio />
  </Figure>
);

/* ---------- status bar ---------- */

const Status = styled.footer`
  display: flex;
  align-items: center;
  height: 19px;
  padding: 0 0 2px 4px;
  background: #f2f2f2;
  border-top: 1px solid #fbfbfb;
  font-size: 9.8px;
  color: #444;
`;
const ViewButton = styled.div`
  display: flex;
  align-items: center;
  justify-content: center;
  align-self: stretch;
  width: 27px;
  margin-bottom: -2px;
  padding-bottom: 2px;
  margin-left: ${(p) => p.$ml || 0}px;
  background: ${(p) => (p.$on ? "#c8c8c8" : "transparent")};
`;
const s = "#6a6a6a";

export default function App() {
  return (
    <Screen>
      <Global />
      <Window>
        <TitleBar />
        <Ribbon>
          <Clipboard /><Slides /><FontGroup /><Paragraph /><Drawing /><Editing />
          <RibbonEnd><Ico w={7} h={5} c="#444" sw={1.5}><path d="M.5 4l3-3 3 3" /></Ico></RibbonEnd>
        </Ribbon>
        <Workspace>
          <Thumbs>
            <Ico w={5} h={7} c="#555" sw={1.4}><path d="M1 .5l3 3-3 3" /></Ico>
            <Vertical>Thumbnails</Vertical>
          </Thumbs>
          <Stage>
            <Slide>
              <SlideTitle><Fit w={636}>PIC18F4620 GPIO (Interrupt Feature) : General illustration</Fit></SlideTitle>
              <Row $x={9}><Fit w={493} size={19.2} bold>What is the difference between (Polling and Interrupt)</Fit></Row>
              <Row $x={10}>
                <Bullet $w={25} $pt={9}><Ico w={9} h={9} c="#111"><circle cx="4.500" cy="4.500" r="4" /></Ico></Bullet>
                <Fit w={65} size={19.2} bold>Polling</Fit>
              </Row>
              <Row $x={44}><Check />
                <Fit w={540} words>Polling is not a hardware mechanism, its a protocol in which</Fit>
                <Fit w={283} ml={9} size={17.8} bold underline words>CPU steadily checks whether the</Fit>
              </Row>
              <Row $x={70}><Fit w={189} size={17.9} bold underline>device needs attention</Fit><span>.</span></Row>
              <Row $x={44}><Check /><Fit w={236} family={calibri} size={17.6}>The device is serviced by CPU.</Fit></Row>
              <Row $x={44}><Check /><Fit w={93}>Advantage</Fit><HeavyArrow /><Fit w={284}>Efficient if the “Events are rapidly</Fit><ThinArrow /><Fit w={93}>High Rate”</Fit></Row>
              <Row $x={44}><Check /><Fit w={119}>Disadvantage</Fit><HeavyArrow /><Fit w={433}>Takes CPU time even when no “Pending Request”</Fit></Row>
              <Diagram />
              <Footer><Fit w={188}>By : Ahmed Abd El-Ghafar</Fit><Fit w={305}>Automotive Embedded Software Engineer</Fit></Footer>
              <Pointer><Ico w={8} h={13} c="#444"><path d="M.5.5v10l2.300-2 1.700 4 1.500-.7-1.600-3.800h3z" fill="#fff" /></Ico></Pointer>
            </Slide>
          </Stage>
          <ScrollBar>
            <ScrollButton $h={12}><Ico w={5} h={3}><path d="M0 3h5L2.500 0z" fill="#555" stroke="none" /></Ico></ScrollButton>
            <ScrollButton $h={15} $mt={279} />
            <ScrollButton $h={12} $mt={179}><Caret /></ScrollButton>
            <ScrollPage>
              <Ico w={6} h={7}><path d="M0 3.500h6L3 .5zM0 7h6L3 4z" fill="#555" stroke="none" /></Ico>
              <Ico w={6} h={7}><path d="M0 0h6L3 3zM0 3.500h6l-3 3z" fill="#555" stroke="none" /></Ico>
            </ScrollPage>
          </ScrollBar>
        </Workspace>
        <Status>
          <Fit w={63}>Slide 544 of 894</Fit>
          <Ico w={11} h={10} ml={13} c={s}><path d="M5.500 1.500v8H.5v-8zM5.500 1.500l2-1h3v9h-5M7 3.500l2.500 3M9.500 3.500L7 6.500" /></Ico>
          <Fit w={86} ml={12}>English (United States)</Fit>
          <Ico w={9} h={9} ml={704} c={s}><path d="M4.500 0L7 3H2z" fill={s} stroke="none" /><path d="M0 4.500h9M0 6.500h9M0 8.500h9" stroke="#b5b5b5" /></Ico>
          <Fit w={24} ml={4}>Notes</Fit>
          <Ico w={10} h={9} ml={14}><path d="M0 0h10v6H6L3 9V6H0z" fill={s} stroke="none" /></Ico>
          <Fit w={41} ml={3}>Comments</Fit>
          <ViewButton $on $ml={14}><Ico w={10} h={9} c={s}><path d="M.5.5h9v8h-9zM2.500 1v7M4.500 3h3.500v2.500H4.500zM4 7h4" /></Ico></ViewButton>
          <ViewButton><Ico w={10} h={9} c={s}><path d="M.5.5h3v2.500h-3zM6 .5h3v2.500H6zM.5 5.500h3V8h-3zM6 5.500h3V8H6z" /></Ico></ViewButton>
          <ViewButton><Ico w={10} h={9} c={s}><path d="M5 1.500v7M5 1.500L3.500.5h-3v7H4l1 1 1-1h3.500v-7h-3zM2 2.500h1.500M2 4.500h1.500M6.500 2.500H8M6.500 4.500H8" /></Ico></ViewButton>
          <ViewButton><Ico w={10} h={9} c={s}><path d="M0 .5h10M1.500.5V5h7V.5M5 5v3M3 8.500h4M3.500 2.700h3" /></Ico></ViewButton>
          <Ico w={6} h={9} ml={4} c="#444"><path d="M0 4.500h6" strokeWidth="1.400" /></Ico>
          <Ico w={83} h={13} ml={3} c="#9a9a9a"><path d="M0 6.500h83M41.500 4.500v4" /><path d="M37 2v9" stroke="#555" strokeWidth="4" /></Ico>
          <Ico w={7} h={9} ml={3} c="#444"><path d="M0 4.500h7M3.500 1v7" strokeWidth="1.400" /></Ico>
          <Fit w={16} ml={11}>88%</Fit>
          <Ico w={10} h={10} ml={11} c={s}><path d="M3.500.5h-3v3M6.500.5h3v3M.5 6.500v3h3M9.500 6.500v3h-3M5 0v3.500M5 6.500V10M0 5h3.500M6.500 5H10" /></Ico>
        </Status>
      </Window>
    </Screen>
  );
}
